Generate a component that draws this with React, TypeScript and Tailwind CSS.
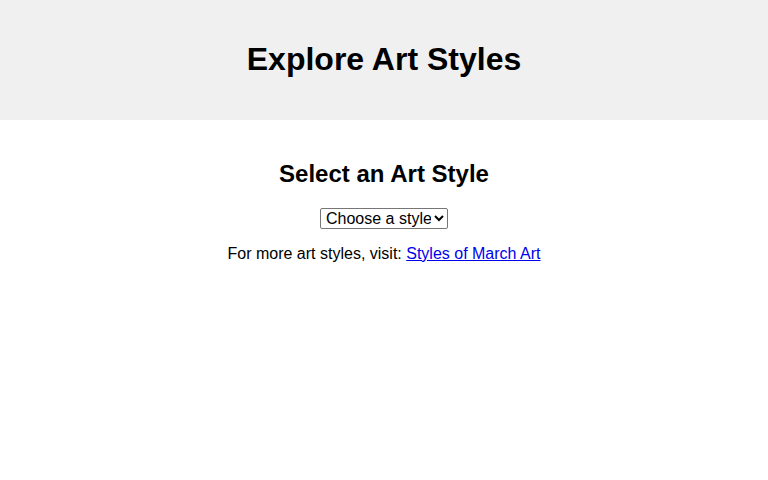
export default function App() {
  return (
    <div className="min-h-screen bg-white text-black" style={{ fontFamily: '"Liberation Sans", Arial, sans-serif' }}>
      {/* Header */}
      <header className="bg-[#f0f0f0] p-5 text-center">
        <h1 className="my-[21.44px] text-[32px] leading-[37px] font-bold">Explore Art Styles</h1>
      </header>

      {/* Main */}
      <main className="p-5 text-center">
        <h2 className="mt-[19.92px] mb-[19.92px] text-2xl leading-[28px] font-bold">Select an Art Style</h2>
        <div className="flex justify-center">
          <select
            defaultValue=""
            className="h-[21px] w-[128px] border border-[#767676] bg-white pl-[1px] pr-0 text-base leading-[18px] text-black rounded-[2px]"
            style={{ fontFamily: '"Liberation Sans", Arial, sans-serif', appearance: "auto" }}
          >
            <option value="">Choose a style</option>
            <option value="impressionism">Impressionism</option>
            <option value="cubism">Cubism</option>
            <option value="surrealism">Surrealism</option>
          </select>
        </div>
        <p className="mt-4 text-base leading-[18px]">
          For more art styles, visit:{" "}
          <a href="#" className="text-[#0000ee] underline">
            Styles of March Art
          </a>
        </p>
      </main>
    </div>
  );
}
